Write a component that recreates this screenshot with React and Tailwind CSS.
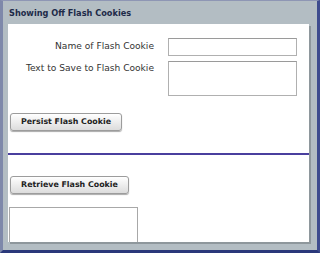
import React from 'react'

const font = { fontFamily: '"DejaVu Sans", Verdana, sans-serif' }

export default function App() {
  return (
    <div
      className="w-[320px] h-[253px] bg-[#b3bdc3] border-t border-t-[#8e96b4] border-l-[3px] border-l-[#7e88aa] border-r-[3px] border-r-[#3e4c8e] border-b-[3px] border-b-[#2a387a] flex flex-col overflow-hidden"
      style={font}
    >
      {/* Header */}
      <div className="h-[23px] pl-[6px] pt-[2px] flex items-center text-[8.2px] font-bold text-[#1d2a48]">
        Showing Off Flash Cookies
      </div>

      {/* Panel */}
      <div className="ml-[5px] w-[301px] h-[218px] bg-white shadow-[2px_2px_0_#8e979c] flex flex-col">
        {/* Form rows */}
        <div className="mt-[14px] flex items-center">
          <div className="w-[146px] text-right text-[9.1px] text-[#333]">Name of Flash Cookie</div>
          <input className="ml-[14px] w-[129px] h-[18px] border border-[#b0b0b0] border-t-[#9a9a9a] outline-none" />
        </div>
        <div className="mt-[5px] flex items-start">
          <div className="w-[146px] text-right text-[9.1px] text-[#333] pt-[1px]">Text to Save to Flash Cookie</div>
          <textarea className="ml-[14px] w-[129px] h-[35px] border border-[#b0b0b0] border-t-[#9a9a9a] resize-none outline-none" />
        </div>

        <button className="mt-[17px] ml-[2px] w-[112px] h-[18px] rounded-[3px] border border-[#9c9c9c] bg-gradient-to-b from-white to-[#dcdcdc] text-[7.9px] font-bold text-[#222] shadow-[0_1px_1px_#aaa]">
          Persist Flash Cookie
        </button>

        <div className="mt-[22px] h-[2px] bg-[#4a3f9e]" />

        <button className="mt-[21px] ml-[2px] w-[119px] h-[18px] rounded-[3px] border border-[#9c9c9c] bg-gradient-to-b from-white to-[#dcdcdc] text-[7.9px] font-bold text-[#222] shadow-[0_1px_1px_#aaa]">
          Retrieve Flash Cookie
        </button>

        <div className="mt-[13px] ml-[1px] w-[129px] flex-1 border border-[#a8a8a8] border-b-0 bg-white" />
      </div>
    </div>
  )
}
